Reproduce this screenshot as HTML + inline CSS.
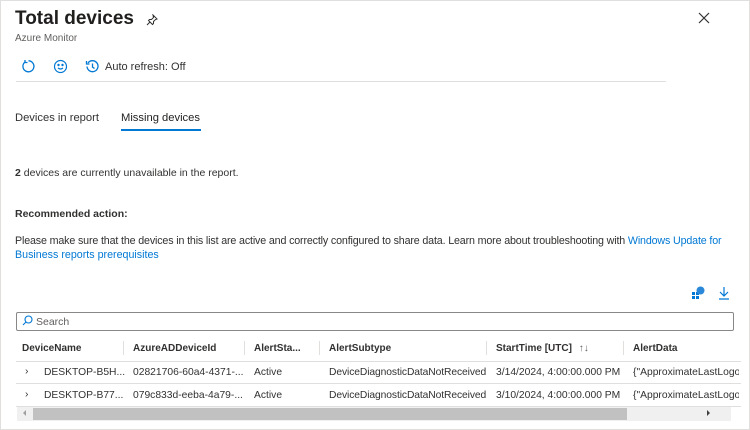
<!DOCTYPE html>
<html><head><style>
*{margin:0;padding:0;box-sizing:border-box}
body{width:750px;height:430px;background:#fff;font-family:"Liberation Sans",sans-serif;color:#323130;position:relative;overflow:hidden;border:1px solid #e1dfdd}
.a{position:absolute;white-space:nowrap}
.t{font-size:10.5px}
.b{color:#0078d4}
.th{font-size:10px;font-weight:bold;color:#323130}
.sep{position:absolute;width:1px;height:14px;background:#e1dfdd;top:340px}
.hl{position:absolute;left:15px;width:725px;height:1px;background:#e1dfdd}
.c{font-size:10.3px;overflow:hidden}
</style></head><body>
<div class="a" style="left:14px;top:7px;font-size:19px;font-weight:bold;color:#201f1e">Total devices</div>
<svg class="a" style="left:145px;top:13px" width="12" height="12" viewBox="0 0 12 12" fill="none" stroke="#323130" stroke-width="1"><path d="M7 1l4 4-1.5.5-2 2 0 2-1 1-4-4 1-1h2l2-2z M4 8l-3 3"/></svg>
<svg class="a" style="left:697px;top:11px" width="12" height="12" viewBox="0 0 12 12" stroke="#323130" stroke-width="1.2"><path d="M1 1l10 10M11 1L1 11"/></svg>
<div class="a" style="left:14px;top:32px;font-size:10px;color:#605e5c">Azure Monitor</div>
<svg class="a" style="left:20px;top:58px" width="15" height="15" viewBox="0 0 15 15" fill="none" stroke="#0078d4" stroke-width="1.3"><path d="M4 3a5.5 5.5 0 1 0 3.5-1.2"/><path d="M4 1v2.5h2.5"/></svg>
<svg class="a" style="left:52px;top:58px" width="15" height="15" viewBox="0 0 15 15" fill="none" stroke="#0078d4" stroke-width="1.2"><circle cx="7.5" cy="7.5" r="6"/><circle cx="5.5" cy="6" r=".6" fill="#0078d4"/><circle cx="9.5" cy="6" r=".6" fill="#0078d4"/><path d="M5 9q2.5 2 5 0"/></svg>
<svg class="a" style="left:84px;top:58px" width="15" height="15" viewBox="0 0 15 15" fill="none" stroke="#0078d4" stroke-width="1.3"><path d="M3 4a5.5 5.5 0 1 1-1 3.5"/><path d="M1.5 2v3h3"/><path d="M7.5 4.5v3.5l2 1.5"/></svg>
<div class="a" style="left:104px;top:60px;font-size:11px">Auto refresh: Off</div>
<div class="a" style="left:15px;top:80px;width:650px;height:1px;background:#e1dfdd"></div>
<div class="a" style="left:14px;top:111px;font-size:11.2px;color:#323130">Devices in report</div>
<div class="a" style="left:120px;top:111px;font-size:11.2px;color:#201f1e">Missing devices</div>
<div class="a" style="left:120px;top:128px;width:80px;height:2px;background:#0078d4"></div>
<div class="a t" style="left:14px;top:166px"><b>2</b> devices are currently unavailable in the report.</div>
<div class="a t" style="left:14px;top:207px;font-weight:bold">Recommended action:</div>
<div class="a t" style="left:14px;top:234px;font-size:10.7px;letter-spacing:-0.15px">Please make sure that the devices in this list are active and correctly configured to share data. Learn more about troubleshooting with <span class="b">Windows Update for</span></div>
<div class="a t b" style="left:14px;top:248px;font-size:10.7px">Business reports prerequisites</div>
<svg class="a" style="left:690px;top:285px" width="14" height="14" viewBox="0 0 14 14"><rect x="1" y="6" width="3" height="3" fill="#0078d4"/><rect x="5" y="6" width="3" height="3" fill="#0078d4"/><rect x="1" y="10" width="3" height="3" fill="#0078d4"/><rect x="5" y="10" width="3" height="3" fill="#0078d4"/><circle cx="9.5" cy="4.5" r="4" fill="#2b88d8"/></svg>
<svg class="a" style="left:717px;top:285px" width="12" height="14" viewBox="0 0 12 14" fill="none" stroke="#0078d4" stroke-width="1.2"><path d="M6 1v9M2 6l4 4 4-4M1 13h10"/></svg>
<div class="a" style="left:15px;top:311px;width:718px;height:19px;border:1px solid #8a8886;border-radius:2px"></div>
<svg class="a" style="left:21px;top:314px" width="11" height="11" viewBox="0 0 11 11" fill="none" stroke="#0078d4" stroke-width="1.1"><circle cx="6.5" cy="4.5" r="3.5"/><path d="M4 7L1 10"/></svg>
<div class="a" style="left:35px;top:315px;font-size:10.5px;color:#605e5c">Search</div>
<div class="a th" style="left:21px;top:342px">DeviceName</div>
<div class="sep" style="left:122px"></div>
<div class="a th" style="left:132px;top:342px">AzureADDeviceId</div>
<div class="sep" style="left:243px"></div>
<div class="a th" style="left:253px;top:342px">AlertSta...</div>
<div class="sep" style="left:318px"></div>
<div class="a th" style="left:328px;top:342px">AlertSubtype</div>
<div class="sep" style="left:485px"></div>
<div class="a th" style="left:495px;top:342px">StartTime [UTC] <span style="font-weight:normal;color:#605e5c;margin-left:4px">↑↓</span></div>
<div class="sep" style="left:622px"></div>
<div class="a th" style="left:632px;top:342px">AlertData</div>
<div class="hl" style="top:360px"></div>
<div class="a c" style="left:24px;top:365px">›</div>
<div class="a c" style="left:43px;top:366px;width:85px">DESKTOP-B5H...</div>
<div class="a c" style="left:132px;top:366px;width:110px">02821706-60a4-4371-...</div>
<div class="a c" style="left:253px;top:366px">Active</div>
<div class="a c" style="left:328px;top:366px;letter-spacing:-0.1px">DeviceDiagnosticDataNotReceived</div>
<div class="a c" style="left:495px;top:366px">3/14/2024, 4:00:00.000 PM</div>
<div class="a c" style="left:632px;top:366px;width:106px">{"ApproximateLastLogonTime</div>
<div class="hl" style="top:382px"></div>
<div class="a c" style="left:24px;top:388px">›</div>
<div class="a c" style="left:43px;top:389px;width:85px">DESKTOP-B77...</div>
<div class="a c" style="left:132px;top:389px;width:110px">079c833d-eeba-4a79-...</div>
<div class="a c" style="left:253px;top:389px">Active</div>
<div class="a c" style="left:328px;top:389px;letter-spacing:-0.1px">DeviceDiagnosticDataNotReceived</div>
<div class="a c" style="left:495px;top:389px">3/10/2024, 4:00:00.000 PM</div>
<div class="a c" style="left:632px;top:389px;width:106px">{"ApproximateLastLogonTime</div>
<div class="hl" style="top:405px"></div>
<div class="a" style="left:16px;top:406px;width:714px;height:14px;background:#f0f0f0"></div>
<div class="a" style="left:32px;top:407px;width:594px;height:12px;background:#c1c1c1"></div>
<div class="a" style="left:22px;top:409px;width:0;height:0;border-top:3px solid transparent;border-bottom:3px solid transparent;border-right:3px solid #a0a0a0"></div>
<div class="a" style="left:706px;top:409px;width:0;height:0;border-top:3px solid transparent;border-bottom:3px solid transparent;border-left:3px solid #404040"></div>
</body></html>
